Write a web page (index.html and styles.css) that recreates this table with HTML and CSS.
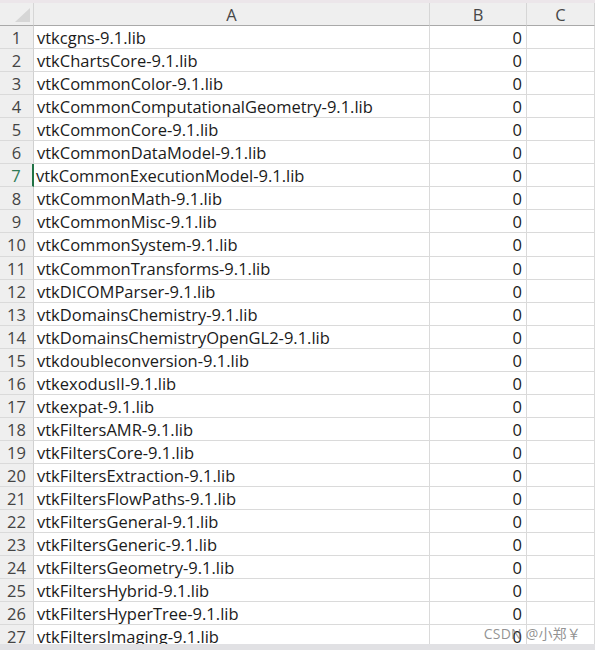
FILE: index.html
```html
<!DOCTYPE html>
<html lang="zh-CN">
<head>
  <meta charset="UTF-8" />
  <meta name="viewport" content="width=device-width, initial-scale=1.0"/>
  <title>vtk libs</title>
  <link rel="stylesheet" href="styles.css">
</head>
<body>
  <div class="sheet">
    <div class="top-strip"></div>
    <div class="grid">
      <div class="row head">
        <div class="cell corner">
          <svg width="15" height="14" viewBox="0 0 15 14"><polygon points="15,0 15,14 0,14" fill="#d6d6d6"/></svg>
        </div>
        <div class="cell col-head">A</div>
        <div class="cell col-head">B</div>
        <div class="cell col-head">C</div>
      </div>
      <div id="rows"></div>
    </div>
    <div class="bottom-bar"></div>
    <div class="watermark">CSDN @小郑￥</div>
  </div>

  <script>
  const libs = [
    'vtkcgns', 'vtkChartsCore', 'vtkCommonColor', 'vtkCommonComputationalGeometry',
    'vtkCommonCore', 'vtkCommonDataModel', 'vtkCommonExecutionModel', 'vtkCommonMath',
    'vtkCommonMisc', 'vtkCommonSystem', 'vtkCommonTransforms', 'vtkDICOMParser',
    'vtkDomainsChemistry', 'vtkDomainsChemistryOpenGL2', 'vtkdoubleconversion',
    'vtkexodusII', 'vtkexpat', 'vtkFiltersAMR', 'vtkFiltersCore', 'vtkFiltersExtraction',
    'vtkFiltersFlowPaths', 'vtkFiltersGeneral', 'vtkFiltersGeneric', 'vtkFiltersGeometry',
    'vtkFiltersHybrid', 'vtkFiltersHyperTree', 'vtkFiltersImaging'
  ];
  const rows = document.getElementById('rows');
  libs.forEach((name, i) => {
    const row = document.createElement('div');
    row.className = 'row' + (i === 6 ? ' active' : '');
    row.innerHTML =
      '<div class="cell num">' + (i + 1) + '</div>' +
      '<div class="cell text">' + name + '-9.1.lib</div>' +
      '<div class="cell val">0</div>' +
      '<div class="cell"></div>';
    rows.appendChild(row);
  });
  </script>
</body>
</html>
```

FILE: styles.css
```css
html, body {
  margin: 0;
  padding: 0;
  background: #ffffff;
}

body {
  font-family: "Open Sans", "Noto Sans CJK SC", sans-serif;
  color: #1b1b1b;
  width: 595px;
  height: 650px;
  overflow: hidden;
}

.sheet {
  position: relative;
  height: 650px;
  display: flex;
  flex-direction: column;
}

.top-strip {
  height: 3px;
  background: #ece6ea;
  flex: none;
}

.grid {
  flex: 1;
  overflow: hidden;
}

.row {
  display: grid;
  grid-template-columns: 34px 396px 97px 1fr;
  height: 23.06px;
}

.cell {
  box-sizing: border-box;
  height: 23.06px;
  border-right: 1px solid #dadada;
  border-bottom: 1px solid #dadada;
  font-size: 16.5px;
  line-height: 24px;
  white-space: nowrap;
  overflow: hidden;
}

.head .cell {
  background: #efefef;
  border-bottom-color: #a9a9a9;
  border-right-color: #d6d6d6;
}

.corner {
  display: flex;
  justify-content: flex-end;
  align-items: flex-end;
  padding: 0 3px 3px 0;
}

.col-head {
  text-align: center;
  color: #474747;
}

.num {
  background: #efefef;
  color: #444444;
  text-align: center;
  border-right-color: #d0d0d0;
}

.text {
  padding-left: 3px;
}

.val {
  text-align: right;
  padding-right: 4px;
}

.active .num {
  color: #2f7a55;
  border-right: 2px solid #217346;
}

.active .text {
  padding-left: 2px;
}

.bottom-bar {
  height: 6px;
  flex: none;
  background: #e1e1e4;
}

.watermark {
  position: absolute;
  right: 14px;
  bottom: 7px;
  font-size: 14px;
  color: rgba(110, 110, 110, 0.75);
  letter-spacing: 0.2px;
}
```
